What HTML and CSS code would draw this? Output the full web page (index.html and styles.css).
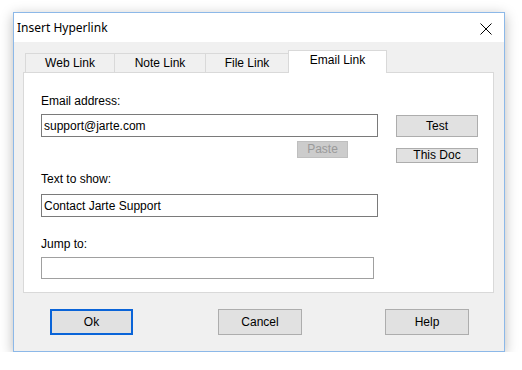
FILE: index.html
```html
<!DOCTYPE html>
<html>
<head>
<meta charset="utf-8">
<link rel="stylesheet" href="styles.css">
</head>
<body>
<div class="window">
  <div class="titlebar">
    <span class="title">Insert Hyperlink</span>
    <svg class="close" width="12" height="12" viewBox="0 0 12 12"><path d="M0.5 0.5 L11.5 11.5 M11.5 0.5 L0.5 11.5" stroke="#000" stroke-width="1" fill="none"/></svg>
  </div>
  <div class="body">
    <div class="tabs">
      <div class="tab t-web">Web Link</div>
      <div class="tab t-note">Note Link</div>
      <div class="tab t-file">File Link</div>
      <div class="tab active t-email">Email Link</div>
    </div>
    <div class="panel">
      <div class="col-left">
        <div class="label l1">Email address:</div>
        <div class="field f1">support@jarte.com</div>
        <div class="paste-row"><div class="btn paste">Paste</div></div>
        <div class="label l2">Text to show:</div>
        <div class="field f2">Contact Jarte Support</div>
        <div class="label l3">Jump to:</div>
        <div class="field f3"></div>
      </div>
      <div class="col-right">
        <div class="btn test">Test</div>
        <div class="btn thisdoc">This Doc</div>
      </div>
    </div>
    <div class="buttons">
      <div class="btn big ok">Ok</div>
      <div class="btn big cancel">Cancel</div>
      <div class="btn big help">Help</div>
    </div>
  </div>
</div>
</body>
</html>
```
FILE: styles.css
```css
html, body {
  margin: 0;
  padding: 0;
  background: #ffffff;
}
body {
  padding: 12px 0 0 13px;
  font-family: "Liberation Sans", Arial, sans-serif;
  font-size: 12px;
  line-height: 14px;
  color: #000;
}
.window {
  width: 492px;
  height: 340px;
  box-sizing: border-box;
  border: 1px solid #8cb8e8;
  background: #f0f0f0;
  box-shadow: 0 3px 12px rgba(0,0,0,0.28);
  display: flex;
  flex-direction: column;
}
.titlebar {
  height: 29px;
  background: #ffffff;
  display: flex;
  align-items: center;
  justify-content: space-between;
  padding: 0 12px 0 3px;
}
.title {
  font-family: "Noto Sans", "Open Sans", sans-serif;
  font-size: 12px;
  line-height: 16px;
  margin-top: 1px;
}
.close {
  display: block;
  margin-top: 2px;
}
.body {
  padding: 8px 10px 0 9px;
}
.tabs {
  display: flex;
  align-items: flex-end;
  height: 22px;
  padding-left: 2px;
  position: relative;
  z-index: 1;
}
.tab {
  box-sizing: border-box;
  height: 19px;
  border: 1px solid #d9d9d9;
  border-bottom: none;
  background: #f0f0f0;
  text-align: center;
  padding-top: 2px;
  margin-left: -1px;
}
.t-web { width: 90px; margin-left: 0; }
.t-note { width: 92px; }
.t-file { width: 84px; }
.t-email { width: 99px; }
.tab.active {
  height: 23px;
  margin-bottom: -1px;
  background: #ffffff;
  padding-top: 2px;
}
.panel {
  box-sizing: border-box;
  height: 221px;
  background: #ffffff;
  border: 1px solid #d9d9d9;
  display: flex;
  padding-left: 17px;
}
.col-left {
  width: 337px;
  display: flex;
  flex-direction: column;
}
.col-right {
  margin-left: 18px;
  width: 82px;
  padding-top: 42px;
  display: flex;
  flex-direction: column;
}
.label { height: 14px; }
.l1 { margin-top: 21px; }
.l2 { margin-top: 14px; }
.l3 { margin-top: 20px; }
.field {
  box-sizing: border-box;
  height: 23px;
  border: 1px solid #7a7a7a;
  padding: 4px 2px 0 2px;
  background: #fff;
}
.f1 { margin-top: 6px; }
.f2 { margin-top: 8px; }
.f3 { margin-top: 6px; width: 333px; height: 22px; border-color: #a0a0a0; }
.paste-row {
  display: flex;
  justify-content: flex-end;
  padding-right: 30px;
  margin-top: 4px;
}
.btn {
  box-sizing: border-box;
  border: 1px solid #adadad;
  background: #e1e1e1;
  text-align: center;
}
.paste {
  width: 51px;
  height: 17px;
  line-height: 15px;
  background: #cccccc;
  border-color: #bfbfbf;
  color: #9a9a9a;
}
.test {
  height: 22px;
  line-height: 20px;
}
.thisdoc {
  height: 15px;
  line-height: 13px;
  margin-top: 11px;
}
.buttons {
  display: flex;
  margin-top: 16px;
  padding-left: 27px;
}
.big {
  width: 84px;
  height: 26px;
  line-height: 24px;
}
.ok {
  width: 83px;
  border: 2px solid #0a64d8;
  line-height: 22px;
}
.cancel { margin-left: 85px; }
.help { margin-left: 83px; }
```
